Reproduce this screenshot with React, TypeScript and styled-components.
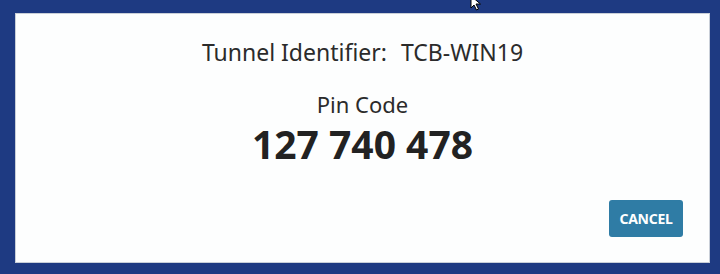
import styled, { createGlobalStyle } from "styled-components";

const GlobalStyle = createGlobalStyle`
  html, body {
    margin: 0;
    padding: 0;
    background: #1e3a82;
    width: 720px;
    height: 274px;
    overflow: hidden;
  }
`;

const Screen = styled.div`
  position: relative;
  width: 720px;
  height: 274px;
  padding: 13px 10px 0 15px;
  box-sizing: border-box;
  font-family: "Noto Sans", "Open Sans", sans-serif;
`;

const Dialog = styled.div`
  width: 695px;
  height: 250px;
  box-sizing: border-box;
  background: #fdfefe;
  border: 1px solid #c9cfd8;
  display: flex;
  flex-direction: column;
  align-items: center;
  padding: 23px 0 25px 0;
  color: #2b2b2b;
`;

const Line = styled.div`
  font-size: 23px;
  line-height: 30px;
  text-align: center;
`;

const Spacer = styled.span`
  display: inline-block;
  width: 14px;
`;

const PinLabel = styled.div`
  font-size: 22px;
  line-height: 28px;
  margin-top: 23px;
`;

const PinCode = styled.div`
  font-size: 39px;
  font-weight: 700;
  line-height: 44px;
  margin-top: 4px;
  color: #222;
`;

const Actions = styled.div`
  margin-top: auto;
  align-self: stretch;
  display: flex;
  justify-content: flex-end;
  padding-right: 26px;
`;

const CancelButton = styled.button`
  width: 74px;
  height: 37px;
  border: none;
  border-radius: 3px;
  background: #2f7ca5;
  color: #fff;
  font-family: "Noto Sans", "Open Sans", sans-serif;
  font-size: 14px;
  font-weight: 700;
  letter-spacing: -0.3px;
  cursor: pointer;
`;

const Cursor = styled.svg`
  position: absolute;
  left: 470px;
  top: -5px;
`;

export default function App() {
  return (
    <>
      <GlobalStyle />
      <Screen>
        <Dialog>
          <Line>
            Tunnel Identifier:<Spacer />TCB-WIN19
          </Line>
          <PinLabel>Pin Code</PinLabel>
          <PinCode>127 740 478</PinCode>
          <Actions>
            <CancelButton>CANCEL</CancelButton>
          </Actions>
        </Dialog>
        <Cursor width="14" height="16" viewBox="0 0 14 16">
          <path d="M1 1 L1 13 L4 10 L6.5 15 L8.5 14 L6 9 L10.5 9 Z" fill="#fff" stroke="#000" strokeWidth="1" />
        </Cursor>
      </Screen>
    </>
  );
}
